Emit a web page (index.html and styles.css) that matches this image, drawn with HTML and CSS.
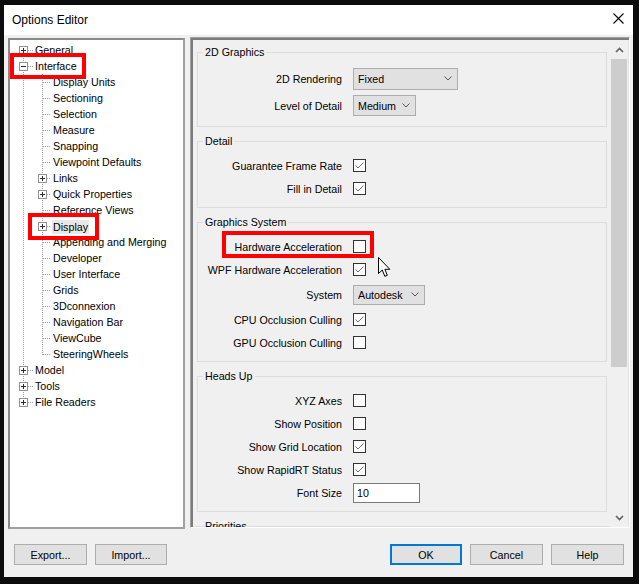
FILE: index.html
```html
<!DOCTYPE html>
<html>
<head>
<meta charset="utf-8">
<link rel="stylesheet" href="styles.css">
</head>
<body>
<div class="window">
  <div class="titlebar">
    <span class="title">Options Editor</span>
    <svg class="close" width="11" height="11" viewBox="0 0 11 11"><path d="M0.5 0.5L10.5 10.5M10.5 0.5L0.5 10.5" stroke="#000" stroke-width="1.1" fill="none"/></svg>
  </div>
  <div class="body">
    <div class="main">
      <div class="tree">
        <div class="trow"><span class="cell1 t-first"><svg class="box" width="9" height="9" viewBox="0 0 9 9"><rect x="0.5" y="0.5" width="8" height="8" fill="#fff" stroke="#919191"/><path d="M2 4.5H7M4.5 2V7" stroke="#2b2b3b"/></svg></span><span class="lbl">General</span></div>
        <div class="trow"><span class="cell1 t-mid"><svg class="box" width="9" height="9" viewBox="0 0 9 9"><rect x="0.5" y="0.5" width="8" height="8" fill="#fff" stroke="#919191"/><path d="M2 4.5H7" stroke="#2b2b3b"/></svg></span><span class="lbl">Interface</span></div>
        <div class="trow"><span class="cell1 t-pass"></span><span class="cell2 c-mid"></span><span class="lbl">Display Units</span></div>
        <div class="trow"><span class="cell1 t-pass"></span><span class="cell2 c-mid"></span><span class="lbl">Sectioning</span></div>
        <div class="trow"><span class="cell1 t-pass"></span><span class="cell2 c-mid"></span><span class="lbl">Selection</span></div>
        <div class="trow"><span class="cell1 t-pass"></span><span class="cell2 c-mid"></span><span class="lbl">Measure</span></div>
        <div class="trow"><span class="cell1 t-pass"></span><span class="cell2 c-mid"></span><span class="lbl">Snapping</span></div>
        <div class="trow"><span class="cell1 t-pass"></span><span class="cell2 c-mid"></span><span class="lbl">Viewpoint Defaults</span></div>
        <div class="trow"><span class="cell1 t-pass"></span><span class="cell2 c-mid"><svg class="box" width="9" height="9" viewBox="0 0 9 9"><rect x="0.5" y="0.5" width="8" height="8" fill="#fff" stroke="#919191"/><path d="M2 4.5H7M4.5 2V7" stroke="#2b2b3b"/></svg></span><span class="lbl">Links</span></div>
        <div class="trow"><span class="cell1 t-pass"></span><span class="cell2 c-mid"><svg class="box" width="9" height="9" viewBox="0 0 9 9"><rect x="0.5" y="0.5" width="8" height="8" fill="#fff" stroke="#919191"/><path d="M2 4.5H7M4.5 2V7" stroke="#2b2b3b"/></svg></span><span class="lbl">Quick Properties</span></div>
        <div class="trow"><span class="cell1 t-pass"></span><span class="cell2 c-mid"></span><span class="lbl">Reference Views</span></div>
        <div class="trow"><span class="cell1 t-pass"></span><span class="cell2 c-mid"><svg class="box" width="9" height="9" viewBox="0 0 9 9"><rect x="0.5" y="0.5" width="8" height="8" fill="#fff" stroke="#919191"/><path d="M2 4.5H7M4.5 2V7" stroke="#2b2b3b"/></svg></span><span class="lbl selected">Display</span></div>
        <div class="trow"><span class="cell1 t-pass"></span><span class="cell2 c-mid"></span><span class="lbl">Appending and Merging</span></div>
        <div class="trow"><span class="cell1 t-pass"></span><span class="cell2 c-mid"></span><span class="lbl">Developer</span></div>
        <div class="trow"><span class="cell1 t-pass"></span><span class="cell2 c-mid"></span><span class="lbl">User Interface</span></div>
        <div class="trow"><span class="cell1 t-pass"></span><span class="cell2 c-mid"></span><span class="lbl">Grids</span></div>
        <div class="trow"><span class="cell1 t-pass"></span><span class="cell2 c-mid"></span><span class="lbl">3Dconnexion</span></div>
        <div class="trow"><span class="cell1 t-pass"></span><span class="cell2 c-mid"></span><span class="lbl">Navigation Bar</span></div>
        <div class="trow"><span class="cell1 t-pass"></span><span class="cell2 c-mid"></span><span class="lbl">ViewCube</span></div>
        <div class="trow"><span class="cell1 t-pass"></span><span class="cell2 c-last"></span><span class="lbl">SteeringWheels</span></div>
        <div class="trow"><span class="cell1 t-mid"><svg class="box" width="9" height="9" viewBox="0 0 9 9"><rect x="0.5" y="0.5" width="8" height="8" fill="#fff" stroke="#919191"/><path d="M2 4.5H7M4.5 2V7" stroke="#2b2b3b"/></svg></span><span class="lbl">Model</span></div>
        <div class="trow"><span class="cell1 t-mid"><svg class="box" width="9" height="9" viewBox="0 0 9 9"><rect x="0.5" y="0.5" width="8" height="8" fill="#fff" stroke="#919191"/><path d="M2 4.5H7M4.5 2V7" stroke="#2b2b3b"/></svg></span><span class="lbl">Tools</span></div>
        <div class="trow"><span class="cell1 t-last"><svg class="box" width="9" height="9" viewBox="0 0 9 9"><rect x="0.5" y="0.5" width="8" height="8" fill="#fff" stroke="#919191"/><path d="M2 4.5H7M4.5 2V7" stroke="#2b2b3b"/></svg></span><span class="lbl">File Readers</span></div>
      </div>

      <div class="panel">
        <div class="panel-content">
          <fieldset class="group">
            <legend>2D Graphics</legend>
            <div class="row tall"><span class="label">2D Rendering</span><span class="select w-render"><span>Fixed</span><svg width="8" height="5" viewBox="0 0 8 5"><path d="M0.5 0.5L4 4L7.5 0.5" stroke="#555" fill="none"/></svg></span></div>
            <div class="row tall"><span class="label">Level of Detail</span><span class="select w-lod"><span>Medium</span><svg width="8" height="5" viewBox="0 0 8 5"><path d="M0.5 0.5L4 4L7.5 0.5" stroke="#555" fill="none"/></svg></span></div>
          </fieldset>
          <fieldset class="group">
            <legend>Detail</legend>
            <div class="row"><span class="label">Guarantee Frame Rate</span><span class="check"><svg width="11" height="11" viewBox="0 0 11 11"><path d="M1.5 5.5L4 8L9.5 2.5" stroke="#707070" fill="none"/></svg></span></div>
            <div class="row"><span class="label">Fill in Detail</span><span class="check"><svg width="11" height="11" viewBox="0 0 11 11"><path d="M1.5 5.5L4 8L9.5 2.5" stroke="#707070" fill="none"/></svg></span></div>
          </fieldset>
          <fieldset class="group">
            <legend>Graphics System</legend>
            <div class="row"><span class="label">Hardware Acceleration</span><span class="check"></span></div>
            <div class="row"><span class="label">WPF Hardware Acceleration</span><span class="check"><svg width="11" height="11" viewBox="0 0 11 11"><path d="M1.5 5.5L4 8L9.5 2.5" stroke="#707070" fill="none"/></svg></span></div>
            <div class="row tall"><span class="label">System</span><span class="select w-sys"><span>Autodesk</span><svg width="8" height="5" viewBox="0 0 8 5"><path d="M0.5 0.5L4 4L7.5 0.5" stroke="#555" fill="none"/></svg></span></div>
            <div class="row"><span class="label">CPU Occlusion Culling</span><span class="check"><svg width="11" height="11" viewBox="0 0 11 11"><path d="M1.5 5.5L4 8L9.5 2.5" stroke="#707070" fill="none"/></svg></span></div>
            <div class="row"><span class="label">GPU Occlusion Culling</span><span class="check"></span></div>
          </fieldset>
          <fieldset class="group">
            <legend>Heads Up</legend>
            <div class="row"><span class="label">XYZ Axes</span><span class="check"></span></div>
            <div class="row"><span class="label">Show Position</span><span class="check"></span></div>
            <div class="row"><span class="label">Show Grid Location</span><span class="check"><svg width="11" height="11" viewBox="0 0 11 11"><path d="M1.5 5.5L4 8L9.5 2.5" stroke="#707070" fill="none"/></svg></span></div>
            <div class="row"><span class="label">Show RapidRT Status</span><span class="check"><svg width="11" height="11" viewBox="0 0 11 11"><path d="M1.5 5.5L4 8L9.5 2.5" stroke="#707070" fill="none"/></svg></span></div>
            <div class="row"><span class="label">Font Size</span><span class="input">10</span></div>
          </fieldset>
          <fieldset class="group group-empty">
            <legend>Priorities</legend>
          </fieldset>
        </div>
        <div class="scrollbar">
          <div class="sb-btn"><svg width="9" height="6" viewBox="0 0 9 6"><path d="M1 5L4.5 1.5L8 5" stroke="#606060" stroke-width="1.6" fill="none"/></svg></div>
          <div class="sb-thumb"></div>
          <div class="sb-space"></div>
          <div class="sb-btn"><svg width="9" height="6" viewBox="0 0 9 6"><path d="M1 1L4.5 4.5L8 1" stroke="#606060" stroke-width="1.6" fill="none"/></svg></div>
        </div>
      </div>
    </div>

    <div class="buttons">
      <span class="btn w73">Export...</span>
      <span class="btn w72">Import...</span>
      <span class="spacer"></span>
      <span class="btn w72 default">OK</span>
      <span class="btn w73">Cancel</span>
      <span class="btn w73">Help</span>
    </div>
  </div>

  <div class="mark mark-interface"></div>
  <div class="mark mark-display"></div>
  <div class="mark mark-hw"></div>
  <svg class="cursor" width="13" height="21" viewBox="0 0 13 21"><path d="M0.5 0.5V16.5L4.3 13L6.8 19.3L9.3 18.3L6.9 12.3H11.8Z" fill="#fff" stroke="#000" stroke-linejoin="round"/></svg>
</div>
</body>
</html>
```
FILE: styles.css
```css
* { box-sizing: border-box; }
html, body { margin: 0; padding: 0; }
body {
  background: #0c0c0c;
  width: 639px;
  height: 584px;
  overflow: hidden;
  font-family: "Liberation Sans", Arial, sans-serif;
  font-size: 10.7px;
  color: #000;
}
.window {
  position: relative;
  margin: 5px 0 0 4px;
  width: 629px;
  height: 572px;
  background: #f0f0f0;
}
.titlebar {
  height: 30px;
  background: #fff;
  display: flex;
  justify-content: space-between;
  align-items: center;
  padding-left: 8px;
}
.title { font-size: 12px; }
.close { align-self: flex-start; margin-top: 8px; margin-right: 9px; }
.body {
  height: 542px;
  padding: 2px 3px 0 4px;
}
.main {
  display: flex;
  align-items: flex-start;
  gap: 5px;
}
.tree {
  width: 177px;
  height: 491px;
  margin-top: 1px;
  background: #fff;
  border: 2px solid #a0a0a0;
  border-top-color: #8a8a8a;
  border-left-color: #8a8a8a;
  padding: 2px 0 0 4px;
}
.trow {
  display: flex;
  height: 16px;
  align-items: stretch;
}
.cell1, .cell2 {
  display: block;
  height: 16px;
  flex: none;
  --dv: repeating-linear-gradient(to bottom, #a0a0a0 0 1px, transparent 1px 2px);
  --dh: repeating-linear-gradient(to right, #a0a0a0 0 1px, transparent 1px 2px);
}
.cell1 { width: 19px; }
.cell2 { width: 18px; }
.box { display: block; margin: 4px 0 0 5px; }
.t-first { background: var(--dv) 9px 8px / 1px 8px no-repeat, var(--dh) 10px 8px / 9px 1px no-repeat; }
.t-mid { background: var(--dv) 9px 0 / 1px 16px no-repeat, var(--dh) 10px 8px / 9px 1px no-repeat; }
.t-last { background: var(--dv) 9px 0 / 1px 9px no-repeat, var(--dh) 10px 8px / 9px 1px no-repeat; }
.t-pass { background: var(--dv) 9px 0 / 1px 16px no-repeat; }
.c-mid { background: var(--dv) 9px 0 / 1px 16px no-repeat, var(--dh) 10px 8px / 8px 1px no-repeat; }
.c-last { background: var(--dv) 9px 0 / 1px 9px no-repeat, var(--dh) 10px 8px / 8px 1px no-repeat; }
.lbl {
  margin-left: 2px;
  line-height: 16px;
  white-space: nowrap;
}
.lbl.selected {
  margin-left: 1px;
  padding: 0 1px;
  background: #e8e8e8;
  line-height: 14px;
  height: 14px;
  align-self: flex-end;
}

.panel {
  width: 440px;
  height: 491px;
  display: flex;
  overflow: hidden;
  border: 1px solid #a0a0a0;
  border-right-color: #fff;
  border-bottom-color: #fff;
  box-shadow: inset 2px 2px 0 #7c7c7c, inset -1px -1px 0 #e3e3e3;
  padding: 7px 1px 0 6px;
}
.panel-content {
  width: 410px;
  flex: none;
}
.group {
  margin: 0 0 7px 0;
  padding: 6px 0 7px 5px;
  border: 1px solid #dcdcdc;
  min-inline-size: 0;
}
.group-empty { height: 60px; }
.group legend {
  padding: 0 2px;
  line-height: 14px;
}
.row {
  display: flex;
  align-items: center;
  height: 23px;
}
.row.tall { height: 27px; }
.label {
  width: 139px;
  margin-right: 11px;
  text-align: right;
  white-space: nowrap;
}
.select {
  display: flex;
  align-items: center;
  justify-content: space-between;
  background: #e1e1e1;
  border: 1px solid #adadad;
  padding: 0 5px 0 4px;
}
.select svg { display: block; }
.w-render { width: 105px; height: 22px; }
.w-lod { width: 63px; height: 21px; }
.w-sys { width: 72px; height: 20px; }
.check {
  width: 13px;
  height: 13px;
  border: 1px solid #333;
  background: #fff;
}
.check svg { display: block; }
.input {
  width: 67px;
  height: 20px;
  border: 1px solid #7a7a7a;
  background: #fff;
  padding-left: 3px;
  line-height: 18px;
}

.scrollbar {
  width: 17px;
  height: 486px;
  margin-top: -4px;
  margin-left: 4px;
  flex: none;
  display: flex;
  flex-direction: column;
  background: #f0f0f0;
}
.sb-btn {
  height: 18px;
  display: flex;
  align-items: center;
  justify-content: center;
  flex: none;
}
.sb-btn svg { display: block; }
.sb-thumb {
  height: 308px;
  width: 16px;
  background: #cdcdcd;
  flex: none;
}
.sb-space { flex: 1; }

.buttons {
  display: flex;
  gap: 8px;
  margin-top: 15px;
  padding: 0 6px;
}
.spacer { flex: 1; }
.btn {
  height: 21px;
  background: #e1e1e1;
  border: 1px solid #adadad;
  display: flex;
  align-items: center;
  justify-content: center;
}
.btn.default { border: 2px solid #0078d7; }
.w73 { width: 73px; }
.w72 { width: 72px; }

.mark {
  position: absolute;
  border: 4px solid #f00;
}
.mark-interface { left: 6px; top: 48px; width: 76px; height: 26px; }
.mark-display { left: 24px; top: 208px; width: 71px; height: 27px; }
.mark-hw { left: 218px; top: 226px; width: 152px; height: 27px; }
.cursor { position: absolute; left: 374px; top: 252px; }
```
